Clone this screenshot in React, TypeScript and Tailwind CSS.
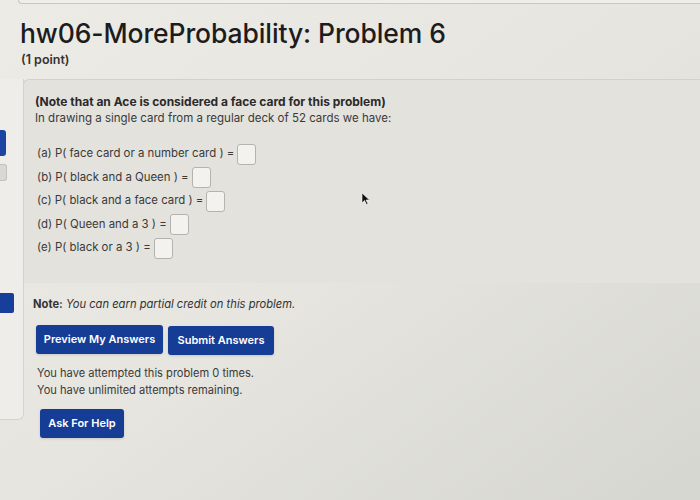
import React from "react";

const questions = [
  "(a) P( face card or a number card ) =",
  "(b) P( black and a Queen ) =",
  "(c) P( black and a face card ) =",
  "(d) P( Queen and a 3 ) =",
  "(e) P( black or a 3 ) =",
];

function AnswerBox() {
  return (
    <span className="ml-[3px] inline-block w-[19px] h-[21px] rounded-[3px] border border-[#b4b3ae] bg-[#f3f2ef]" />
  );
}

function BlueButton({ label, className }: { label: string; className: string }) {
  return (
    <button
      className={`h-[29px] rounded-[3px] bg-[#163d96] text-white text-[11px] font-semibold flex items-center justify-center shadow-sm ${className}`}
    >
      {label}
    </button>
  );
}

export default function App() {
  return (
    <div
      className="relative w-[700px] h-[500px] overflow-hidden bg-gradient-to-br from-[#ecebe6] via-[#e6e5e0] to-[#d6d6d0] text-[#2e2e2e]"
      style={{ fontFamily: "Inter, 'Liberation Sans', sans-serif" }}
    >
      {/* bottom edge of the box above */}
      <div className="ml-[18px] h-[4px] rounded-bl-md border-b border-l border-[#c8c7c2] bg-[#efeeea]" />

      <div className="pl-[20px] pt-[13px]">
        <h1 className="text-[26.5px] leading-[32px] font-medium text-[#1c1c1c] tracking-[-0.1px]">
          hw06-MoreProbability: Problem 6
        </h1>
        <p className="mt-[4px] pl-[1px] text-[12.5px] leading-[14px] font-semibold text-[#333]">(1 point)</p>
      </div>

      <div className="mt-[12px] flex">
        {/* left nav column, mostly off screen */}
        <div className="w-[24px] h-[341px] shrink-0 border-r border-b border-[#d5d4cf] rounded-br-md bg-[#eeede9] flex flex-col">
          <div className="mt-[51px] w-[6px] h-[26px] rounded-r-[3px] bg-[#1d44a3]" />
          <div className="mt-[8px] w-[7px] h-[17px] rounded-r-[3px] border border-l-0 border-[#c2c1bc] bg-[#d9d8d3]" />
          <div className="mt-[112px] w-[14px] h-[20px] rounded-r-[2px] bg-[#173e99]" />
        </div>

        <div className="flex-1 -ml-[1px]">
          <div className="h-[204px] rounded-tl-md border-t border-l border-[#d2d1cc] bg-[#e3e2dd] pl-[11px] pt-[13px]">
            <p className="text-[12px] leading-[17px] font-bold text-[#2a2a2a]">
              (Note that an Ace is considered a face card for this problem)
            </p>
            <p className="text-[11.5px] leading-[17px] text-[#3a3a3a]">
              In drawing a single card from a regular deck of 52 cards we have:
            </p>
            <div className="mt-[16px] pl-[2px] flex flex-col gap-[1.5px]">
              {questions.map((q) => (
                <div key={q} className="flex items-center h-[22px] text-[11.4px] text-[#3a3a3a]">
                  <span>{q}</span>
                  <AnswerBox />
                </div>
              ))}
            </div>
          </div>

          <div className="pl-[10px] pt-[13px]">
            <p className="text-[11.2px] leading-[16px] text-[#333]">
              <span className="font-bold">Note:</span>{" "}
              <i>You can earn partial credit on this problem.</i>
            </p>
            <div className="mt-[13px] pl-[3px] flex gap-[5px]">
              <BlueButton label="Preview My Answers" className="w-[127px]" />
              <BlueButton label="Submit Answers" className="w-[106px] mt-[1px]" />
            </div>
            <p className="mt-[10px] pl-[4px] text-[11.1px] leading-[17px] text-[#3a3a3a]">
              You have attempted this problem 0 times.
            </p>
            <p className="pl-[4px] text-[11.1px] leading-[17px] text-[#3a3a3a]">
              You have unlimited attempts remaining.
            </p>
            <div className="mt-[10px] pl-[7px]">
              <BlueButton label="Ask For Help" className="w-[84px] h-[28px]" />
            </div>
          </div>
        </div>
      </div>

      {/* mouse pointer */}
      <svg className="absolute left-[361px] top-[192px]" width="9" height="13" viewBox="0 0 9 13">
        <path d="M1 1 L1 11 L3.5 8.5 L5.5 12.5 L7 11.8 L5 8 L8.5 8 Z" fill="#111" stroke="#fff" strokeWidth="0.6" />
      </svg>
    </div>
  );
}
